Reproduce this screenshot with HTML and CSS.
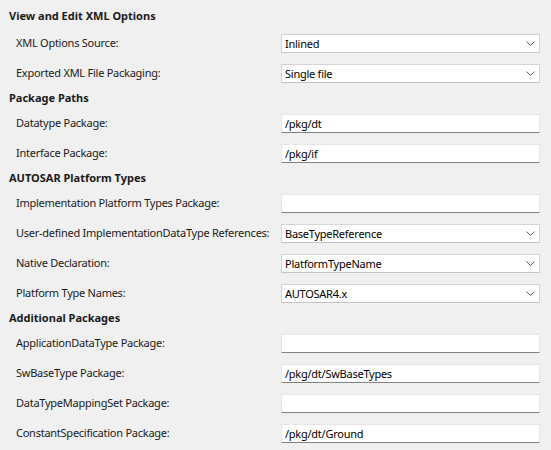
FILE: index.html
```html
<!DOCTYPE html>
<html lang="en">

<head>
    <meta charset="UTF-8" />
    <title>XML Options</title>
    <link rel="stylesheet" href="styles.css">
</head>

<body>
    <div class="options">
        <div class="group-title first">View and Edit XML Options</div>
        <div class="row">
            <label>XML Options Source:</label>
            <div class="combo"><span>Inlined</span>
                <svg class="chevron" width="9" height="5" viewBox="0 0 9 5"><path d="M0.5 0.5 L4.5 4.5 L8.5 0.5" /></svg>
            </div>
        </div>
        <div class="row">
            <label>Exported XML File Packaging:</label>
            <div class="combo"><span>Single file</span>
                <svg class="chevron" width="9" height="5" viewBox="0 0 9 5"><path d="M0.5 0.5 L4.5 4.5 L8.5 0.5" /></svg>
            </div>
        </div>

        <div class="group-title">Package Paths</div>
        <div class="row">
            <label>Datatype Package:</label>
            <div class="textbox">/pkg/dt</div>
        </div>
        <div class="row">
            <label>Interface Package:</label>
            <div class="textbox">/pkg/if</div>
        </div>

        <div class="group-title">AUTOSAR Platform Types</div>
        <div class="row">
            <label>Implementation Platform Types Package:</label>
            <div class="textbox"></div>
        </div>
        <div class="row">
            <label>User-defined ImplementationDataType References:</label>
            <div class="combo"><span>BaseTypeReference</span>
                <svg class="chevron" width="9" height="5" viewBox="0 0 9 5"><path d="M0.5 0.5 L4.5 4.5 L8.5 0.5" /></svg>
            </div>
        </div>
        <div class="row">
            <label>Native Declaration:</label>
            <div class="combo"><span>PlatformTypeName</span>
                <svg class="chevron" width="9" height="5" viewBox="0 0 9 5"><path d="M0.5 0.5 L4.5 4.5 L8.5 0.5" /></svg>
            </div>
        </div>
        <div class="row">
            <label>Platform Type Names:</label>
            <div class="combo"><span>AUTOSAR4.x</span>
                <svg class="chevron" width="9" height="5" viewBox="0 0 9 5"><path d="M0.5 0.5 L4.5 4.5 L8.5 0.5" /></svg>
            </div>
        </div>

        <div class="group-title">Additional Packages</div>
        <div class="row">
            <label>ApplicationDataType Package:</label>
            <div class="textbox"></div>
        </div>
        <div class="row">
            <label>SwBaseType Package:</label>
            <div class="textbox">/pkg/dt/SwBaseTypes</div>
        </div>
        <div class="row">
            <label>DataTypeMappingSet Package:</label>
            <div class="textbox"></div>
        </div>
        <div class="row">
            <label>ConstantSpecification Package:</label>
            <div class="textbox">/pkg/dt/Ground</div>
        </div>
    </div>
</body>

</html>
```

FILE: styles.css
```css
body {
    margin: 0;
    padding-top: 6px;
    background-color: #f0f0f0;
    font-family: 'Noto Sans', sans-serif;
    font-size: 11px;
    color: #1a1a1a;
}

.options {
    width: 551px;
}

.group-title {
    height: 20px;
    line-height: 20px;
    padding-left: 9px;
    font-weight: bold;
}

.group-title.first {
    margin-bottom: 2px;
}

.row {
    display: flex;
    align-items: flex-start;
    height: 30px;
    padding-top: 6px;
    box-sizing: border-box;
    letter-spacing: -0.25px;
}

.row label {
    flex: 1;
    padding-left: 16px;
    line-height: 18px;
    white-space: nowrap;
}

.combo,
.textbox {
    width: 259px;
    height: 19px;
    margin-right: 11px;
    box-sizing: border-box;
    background: #fff;
    padding-left: 3px;
    line-height: 17px;
    color: #000;
    white-space: nowrap;
}

.combo {
    display: flex;
    align-items: center;
    justify-content: space-between;
    border: 1px solid #d4d4d4;
    border-bottom-color: #c4c4c4;
}

.combo .chevron {
    margin-right: 4px;
}

.chevron path {
    fill: none;
    stroke: #5f5f5f;
    stroke-width: 1;
}

.textbox {
    border: 1px solid #e6e6e6;
    border-bottom: 1px solid #838383;
}
```
